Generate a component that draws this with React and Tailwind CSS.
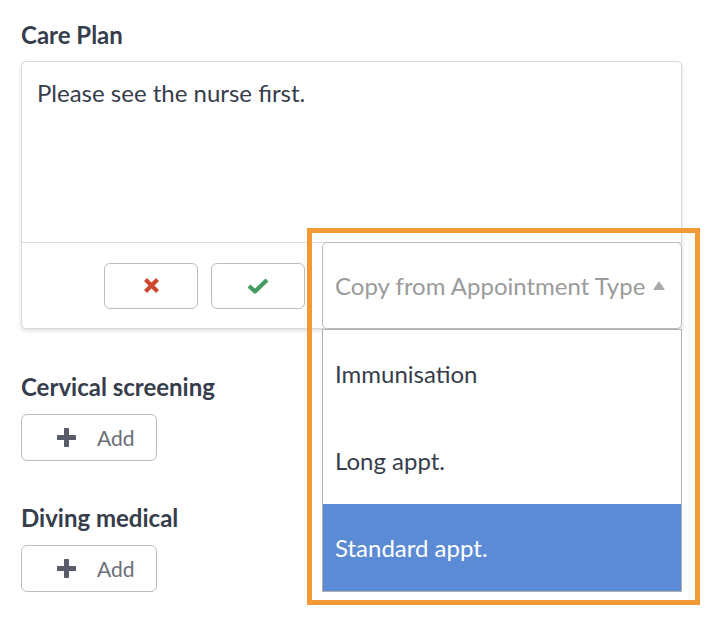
import React from "react";

function XIcon() {
  return (
    <svg width="17" height="17" viewBox="0 0 17 17">
      <path d="M2.5 2.5 L14.5 14.5 M14.5 2.5 L2.5 14.5" stroke="#d0472f" strokeWidth="4.2" strokeLinecap="butt" />
    </svg>
  );
}

function CheckIcon() {
  return (
    <svg width="22" height="16" viewBox="0 0 22 16">
      <path d="M2 8 L8 13.5 L20 2" stroke="#449c62" strokeWidth="4.2" fill="none" strokeLinejoin="round" />
    </svg>
  );
}

function PlusIcon() {
  return (
    <svg width="19" height="19" viewBox="0 0 19 19">
      <path d="M9.5 1.5 V17.5 M1.5 9.5 H17.5" stroke="#575c68" strokeWidth="5" strokeLinecap="round" />
    </svg>
  );
}

function AddButton() {
  return (
    <button className="flex items-center w-[136px] h-[47px] border border-[#bdbdc2] rounded-[6px] bg-white pl-[35px]">
      <PlusIcon />
      <span className="ml-[21px] text-[21px] leading-[24px] text-[#6a6e78]">Add</span>
    </button>
  );
}

export default function App() {
  return (
    <div className="relative w-[710px] h-[624px] bg-white font-['Lato',sans-serif] text-[#363d4b] pl-[21px] pt-[21px] overflow-hidden">
      <div className="text-[24px] font-bold leading-[28px]">Care Plan</div>
      <div className="mt-[12px] w-[661px] border border-[#dadada] rounded-[5px] bg-white shadow-[0_2px_4px_rgba(0,0,0,0.13)]">
        <div className="h-[180px] pl-[15px] pt-[17px] text-[24px] leading-[28px]">Please see the nurse first.</div>
        <div className="border-t border-[#dcdcdc] h-[86px] flex items-center pl-[82px] gap-[13px]">
          <button className="w-[94px] h-[46px] border border-[#bdbdc2] rounded-[6px] bg-white flex items-center justify-center">
            <XIcon />
          </button>
          <button className="w-[94px] h-[46px] border border-[#bdbdc2] rounded-[6px] bg-white flex items-center justify-center">
            <CheckIcon />
          </button>
        </div>
      </div>

      <div className="mt-[44px] text-[24px] font-bold leading-[28px]">Cervical screening</div>
      <div className="mt-[13px]">
        <AddButton />
      </div>

      <div className="mt-[43px] text-[24px] font-bold leading-[28px]">Diving medical</div>
      <div className="mt-[13px]">
        <AddButton />
      </div>

      <div className="absolute left-[307px] top-[228px] w-[393px] h-[377px] border-[5px] border-[#f39a37] pl-[10px] pt-[9px]">
        <div className="w-[360px] flex flex-col">
          <div className="h-[87px] border border-[#b9b9be] rounded-[5px] bg-white flex items-center pl-[12px] pr-[16px]">
            <span className="flex-1 text-[24px] leading-[28px] text-[#9b9b9b] whitespace-nowrap">Copy from Appointment Type</span>
            <svg width="12" height="9" viewBox="0 0 12 9">
              <path d="M6 0 L12 9 L0 9 Z" fill="#a8a8a8" />
            </svg>
          </div>
          <div className="border border-[#b0b0b0] bg-white">
            <div className="h-[87px] flex items-center pl-[12px] text-[24px] leading-[28px]">Immunisation</div>
            <div className="h-[87px] flex items-center pl-[12px] text-[24px] leading-[28px]">Long appt.</div>
            <div className="h-[87px] flex items-center pl-[12px] text-[24px] leading-[28px] bg-[#5b8bd4] text-white">Standard appt.</div>
          </div>
        </div>
      </div>
    </div>
  );
}
